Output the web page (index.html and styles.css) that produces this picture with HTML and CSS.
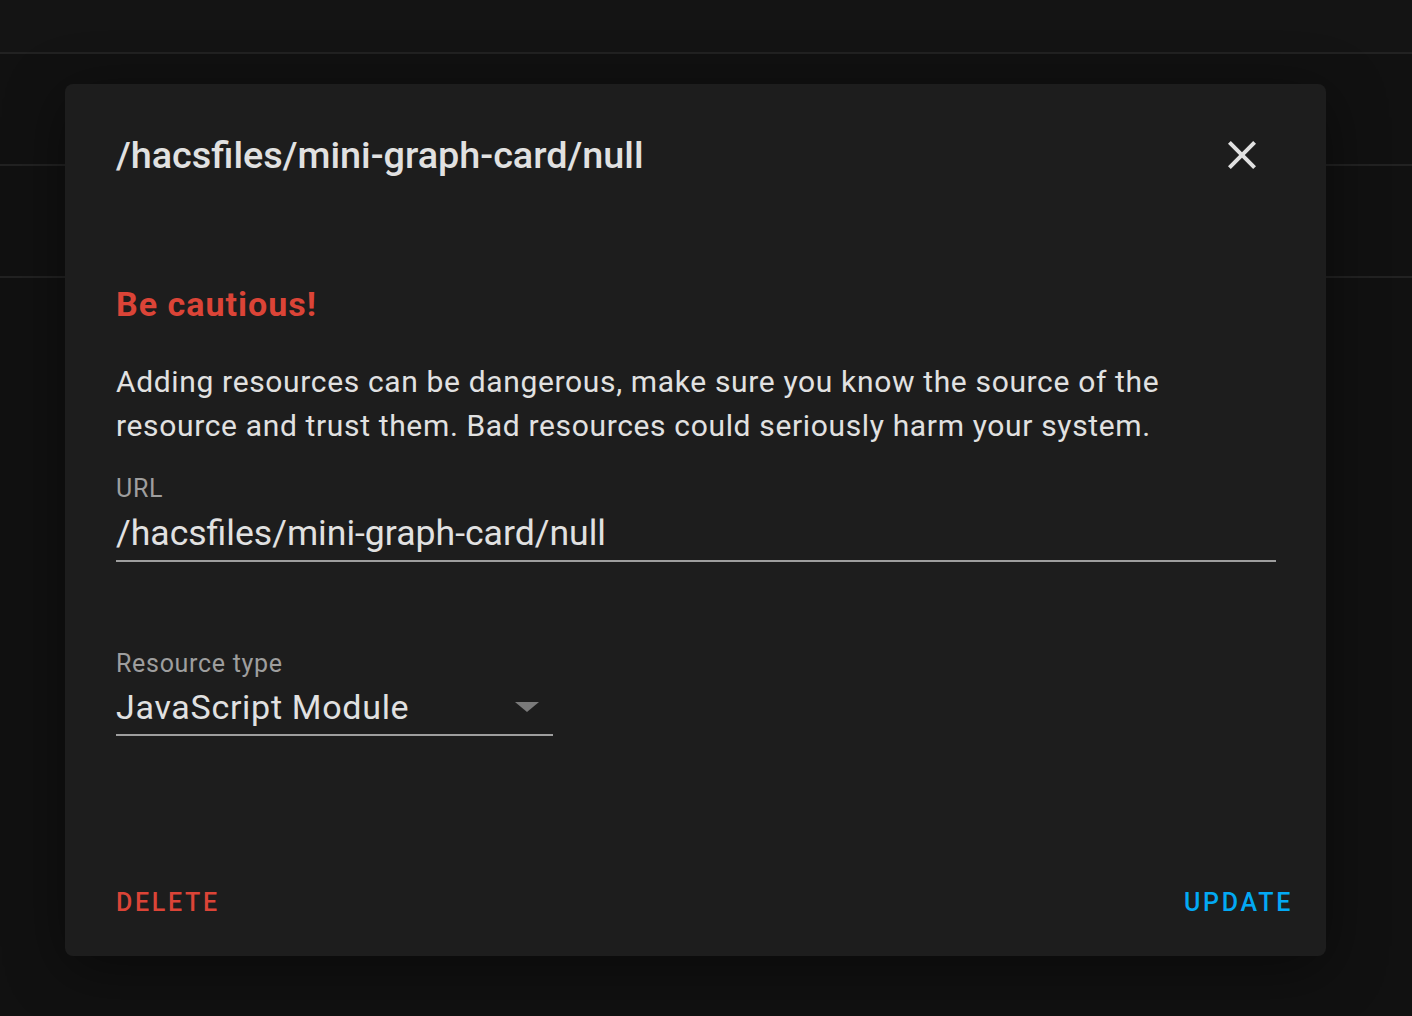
FILE: index.html
```html
<!DOCTYPE html>
<html lang="en">

<head>
  <meta charset="UTF-8">
  <meta name="viewport" content="width=device-width, initial-scale=1.0">
  <title>Resource</title>
  <link rel="stylesheet" href="styles.css">
</head>

<body>
  <!-- page behind the dialog -->
  <div class="page">
    <div class="row row-top"></div>
    <div class="row"></div>
    <div class="row"></div>
  </div>

  <div class="dialog">
    <div class="dialog-header">
      <h2 class="dialog-title">/hacsfiles/mini-graph-card/null</h2>
      <button class="close-btn" aria-label="Close">
        <svg viewBox="0 0 24 24" width="48" height="48">
          <path fill="currentColor" d="M19,6.41L17.59,5L12,10.59L6.41,5L5,6.41L10.59,12L5,17.59L6.41,19L12,13.41L17.59,19L19,17.59L13.41,12L19,6.41Z" />
        </svg>
      </button>
    </div>

    <div class="dialog-content">
      <h3 class="warning">Be cautious!</h3>
      <p class="warning-text">Adding resources can be dangerous, make sure you know the source of the resource and trust them. Bad resources could seriously harm your system.</p>

      <div class="field field-url">
        <label class="field-label">URL</label>
        <div class="field-value">/hacsfiles/mini-graph-card/null</div>
      </div>

      <div class="field field-select">
        <label class="field-label">Resource type</label>
        <div class="field-value">
          <span>JavaScript Module</span>
          <span class="arrow"></span>
        </div>
      </div>
    </div>

    <div class="dialog-actions">
      <button class="action delete">Delete</button>
      <button class="action update">Update</button>
    </div>
  </div>
</body>

</html>
```

FILE: styles.css
```css
/* Global Styles */
body {
  font-family: 'Roboto', 'Liberation Sans', sans-serif;
  background: #111111;
  color: #e1e1e1;
  margin: 0;
  padding: 0;
  height: 100vh;
  overflow: hidden;
}

/* Page behind */
.page {
  display: flex;
  flex-direction: column;
}

.row {
  height: 110px;
  border-bottom: 2px solid #222222;
}

.row-top {
  height: 52px;
  background: #141414;
}

/* Dialog */
.dialog {
  position: absolute;
  top: 84px;
  left: 65px;
  width: 1261px;
  height: 872px;
  background: #1d1d1d;
  border-radius: 8px;
  box-shadow: 0 12px 60px rgba(0, 0, 0, 0.45);
  box-sizing: border-box;
  padding: 0 33px 0 51px;
  display: flex;
  flex-direction: column;
}

.dialog-header {
  display: flex;
  align-items: center;
  justify-content: space-between;
  height: 142px;
}

.dialog-title {
  margin: 0;
  font-size: 37.8px;
  font-weight: 500;
  color: #e1e1e1;
}

.close-btn {
  background: none;
  border: none;
  padding: 0;
  margin-right: 27px;
  color: #e1e1e1;
  width: 48px;
  height: 48px;
  cursor: pointer;
}

.close-btn svg {
  display: block;
}

.dialog-content {
  flex: 1;
  padding-right: 17px;
}

.warning {
  margin: 58px 0 0;
  font-size: 34px;
  font-weight: 700;
  letter-spacing: 1px;
  color: #db4437;
}

.warning-text {
  margin: 36px 0 0;
  max-width: 1100px;
  font-size: 30px;
  line-height: 44px;
  letter-spacing: 0.65px;
  color: #e1e1e1;
}

/* Fields */
.field {
  display: flex;
  flex-direction: column;
}

.field-label {
  font-size: 25px;
  color: #9e9e9e;
  letter-spacing: 0.7px;
}

.field-value {
  color: #e1e1e1;
  border-bottom: 2px solid #9e9e9e;
}

.field-url {
  margin-top: 26px;
}

.field-url .field-value {
  font-size: 35.6px;
  padding: 9px 0 6px;
}

.field-select {
  margin-top: 87px;
  width: 437px;
}

.field-select .field-value {
  font-size: 34px;
  letter-spacing: 0.7px;
  padding: 9px 0 7px;
  display: flex;
  align-items: center;
  justify-content: space-between;
}

.arrow {
  width: 0;
  height: 0;
  border-left: 12px solid transparent;
  border-right: 12px solid transparent;
  border-top: 10px solid #7a7a7a;
  margin-right: 14px;
}

/* Actions */
.dialog-actions {
  display: flex;
  justify-content: space-between;
  align-items: center;
  height: 108px;
}

.action {
  background: none;
  border: none;
  padding: 0;
  font-family: inherit;
  font-size: 25px;
  font-weight: 500;
  letter-spacing: 2.7px;
  text-transform: uppercase;
  cursor: pointer;
}

.delete {
  color: #db4437;
}

.update {
  color: #03a9f4;
}
```
